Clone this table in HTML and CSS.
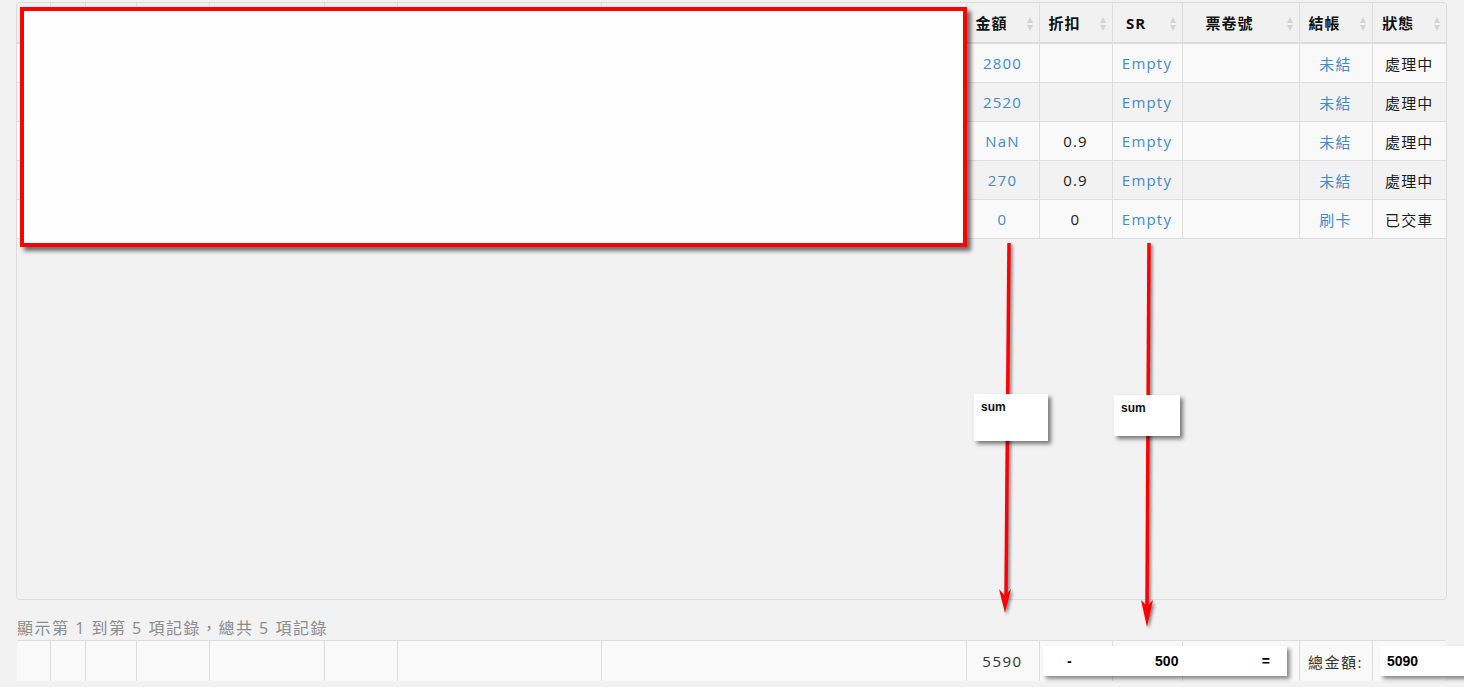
FILE: index.html
```html
<!DOCTYPE html>
<html lang="zh-Hant">
<head>
<meta charset="utf-8">
<title>記錄</title>
<link rel="stylesheet" href="styles.css">
</head>
<body>
<div class="page">
  <div class="wrap">
    <table class="grid">
      <colgroup>
        <col class="c33"><col class="c35"><col class="c51"><col class="c73"><col class="c115"><col class="c73"><col class="c204"><col class="c365"><col class="c73"><col class="c73"><col class="c70"><col class="c117"><col class="c73"><col>
      </colgroup>
      <thead>
        <tr>
          <th class="sort"></th><th class="sort"></th><th class="sort"></th><th class="sort"></th><th class="sort"></th><th class="sort"></th><th class="sort"></th><th class="sort"></th>
          <th class="sort">金額</th><th class="sort">折扣</th><th class="sort">SR</th><th class="sort">票卷號</th><th class="sort">結帳</th><th class="sort">狀態</th>
        </tr>
      </thead>
      <tbody>
        <tr><td></td><td></td><td></td><td></td><td></td><td></td><td></td><td></td><td class="lnk">2800</td><td></td><td class="lnk">Empty</td><td></td><td class="lnk">未結</td><td>處理中</td></tr>
        <tr><td></td><td></td><td></td><td></td><td></td><td></td><td></td><td></td><td class="lnk">2520</td><td></td><td class="lnk">Empty</td><td></td><td class="lnk">未結</td><td>處理中</td></tr>
        <tr><td></td><td></td><td></td><td></td><td></td><td></td><td></td><td></td><td class="lnk">NaN</td><td>0.9</td><td class="lnk">Empty</td><td></td><td class="lnk">未結</td><td>處理中</td></tr>
        <tr><td></td><td></td><td></td><td></td><td></td><td></td><td></td><td></td><td class="lnk">270</td><td>0.9</td><td class="lnk">Empty</td><td></td><td class="lnk">未結</td><td>處理中</td></tr>
        <tr><td></td><td></td><td></td><td></td><td></td><td></td><td></td><td></td><td class="lnk">0</td><td>0</td><td class="lnk">Empty</td><td></td><td class="lnk">刷卡</td><td>已交車</td></tr>
      </tbody>
    </table>
  </div>
  <div class="info">顯示第 1 到第 5 項記錄，總共 5 項記錄</div>
  <table class="foot">
    <colgroup>
      <col class="c33"><col class="c35"><col class="c51"><col class="c73"><col class="c115"><col class="c73"><col class="c204"><col class="c365"><col class="c73"><col class="c73"><col class="c70"><col class="c117"><col class="c73"><col>
    </colgroup>
    <tr>
      <td></td><td></td><td></td><td></td><td></td><td></td><td></td><td></td>
      <td>5590</td><td></td><td></td><td></td><td>總金額:</td><td></td>
    </tr>
  </table>

  <div class="calc"><span>-</span><span>500</span><span>=</span></div>
  <div class="total">5090</div>

  <div class="mask"></div>
  <svg class="arrows" width="1464" height="687" viewBox="0 0 1464 687">
    <path d="M1009 243 L1006 597" stroke="#ff0000" stroke-width="3.5" fill="none"/>
    <path d="M1005 613 L999 589 L1005 596 L1011 589 Z" fill="#ff0000"/>
    <path d="M1149 243 L1147 606" stroke="#ff0000" stroke-width="3.5" fill="none"/>
    <path d="M1147 627 L1141 600 L1147 606 L1153 600 Z" fill="#ff0000"/>
  </svg>
  <div class="note note1">sum</div>
  <div class="note note2">sum</div>
</div>
</body>
</html>
```
FILE: styles.css
```css
html, body {
  margin: 0;
  padding: 0;
  background: #f2f2f2;
  overflow: hidden;
}
.page {
  position: relative;
  width: 1464px;
  height: 687px;
  box-sizing: border-box;
  padding: 2px 17px 0 16px;
  font-family: "Open Sans", "Noto Sans CJK TC", sans-serif;
  color: #222;
}
.wrap {
  height: 596px;
  border: 1px solid #dcdcdc;
  border-radius: 4px;
  background: #f2f2f2;
  overflow: hidden;
}
.grid, .foot {
  width: 100%;
  table-layout: fixed;
  border-collapse: collapse;
}
.c33 { width: 33px; }
.c35 { width: 35px; }
.c51 { width: 51px; }
.c70 { width: 70px; }
.c73 { width: 73px; }
.c115 { width: 115px; }
.c117 { width: 117px; }
.c204 { width: 204px; }
.c365 { width: 365px; }

.grid th {
  position: relative;
  height: 39px;
  padding: 0 28px 0 6px;
  background: #f1f1f1;
  border-left: 1px solid #dddddd;
  border-bottom: 2px solid #dddddd;
  font-family: "Open Sans", "Noto Sans CJK TC", sans-serif;
  font-size: 15px;
  font-weight: bold;
  letter-spacing: 1px;
  color: #111;
  text-align: center;
  white-space: nowrap;
}
.grid th:first-child, .grid td:first-child, .foot td:first-child { border-left: none; }
.sort::before, .sort::after {
  content: "";
  position: absolute;
  right: 6px;
  width: 0;
  height: 0;
  border-left: 3.5px solid transparent;
  border-right: 3.5px solid transparent;
}
.sort::before {
  top: 14px;
  border-bottom: 6px solid #d4d4d4;
}
.sort::after {
  top: 22px;
  border-top: 6px solid #d4d4d4;
}
.grid td {
  height: 38px;
  padding: 0 4px;
  border-left: 1px solid #dddddd;
  border-bottom: 1px solid #dddddd;
  font-size: 15px;
  letter-spacing: 1.2px;
  text-align: center;
  color: #1a1a1a;
  white-space: nowrap;
}
.grid tbody tr:nth-child(odd) td { background: #f9f9f9; }
.grid tbody tr:nth-child(even) td { background: #f2f2f2; }
.grid td.lnk { color: #428bca; }

.info {
  height: 23px;
  padding-top: 17px;
  padding-left: 1px;
  line-height: 23px;
  font-size: 16px;
  letter-spacing: 1.5px;
  color: #8c8c8c;
}
.foot {
  width: 1428px;
  margin-left: 1px;
}
.foot td {
  height: 40px;
  padding: 0 4px;
  background: #f9f9f9;
  border-top: 1px solid #dddddd;
  border-left: 1px solid #dddddd;
  font-size: 15px;
  letter-spacing: 1.5px;
  text-align: center;
  color: #333;
  white-space: nowrap;
}

.calc {
  position: absolute;
  left: 1043px;
  top: 646px;
  width: 244px;
  height: 30px;
  box-sizing: border-box;
  padding: 0 17px 0 24px;
  display: flex;
  align-items: center;
  justify-content: space-between;
  background: #ffffff;
  box-shadow: 3px 3px 4px rgba(0, 0, 0, 0.45);
  font-family: "Liberation Sans", Arial, sans-serif;
  font-weight: bold;
  font-size: 14px;
  color: #000;
}
.total {
  position: absolute;
  left: 1380px;
  top: 646px;
  width: 120px;
  height: 30px;
  box-sizing: border-box;
  padding-left: 7px;
  line-height: 30px;
  background: #ffffff;
  box-shadow: 3px 3px 4px rgba(0, 0, 0, 0.45);
  font-family: "Liberation Sans", Arial, sans-serif;
  font-weight: bold;
  font-size: 14px;
  color: #000;
}

.mask {
  position: absolute;
  left: 20px;
  top: 7px;
  width: 947px;
  height: 240px;
  box-sizing: border-box;
  border: 4px solid #ff0000;
  background: #fefefe;
  box-shadow: 4px 4px 4px rgba(0, 0, 0, 0.55);
}
.arrows {
  position: absolute;
  left: 0;
  top: 0;
  pointer-events: none;
  filter: drop-shadow(2px 2px 1.5px rgba(0, 0, 0, 0.45));
}
.note {
  position: absolute;
  box-sizing: border-box;
  padding: 6px 0 0 7px;
  background: #ffffff;
  box-shadow: 3px 3px 4px rgba(0, 0, 0, 0.5);
  font-family: "Liberation Sans", Arial, sans-serif;
  font-weight: bold;
  font-size: 12px;
  line-height: 14px;
  color: #111;
}
.note1 {
  left: 974px;
  top: 394px;
  width: 74px;
  height: 47px;
}
.note2 {
  left: 1114px;
  top: 395px;
  width: 66px;
  height: 41px;
}
```
